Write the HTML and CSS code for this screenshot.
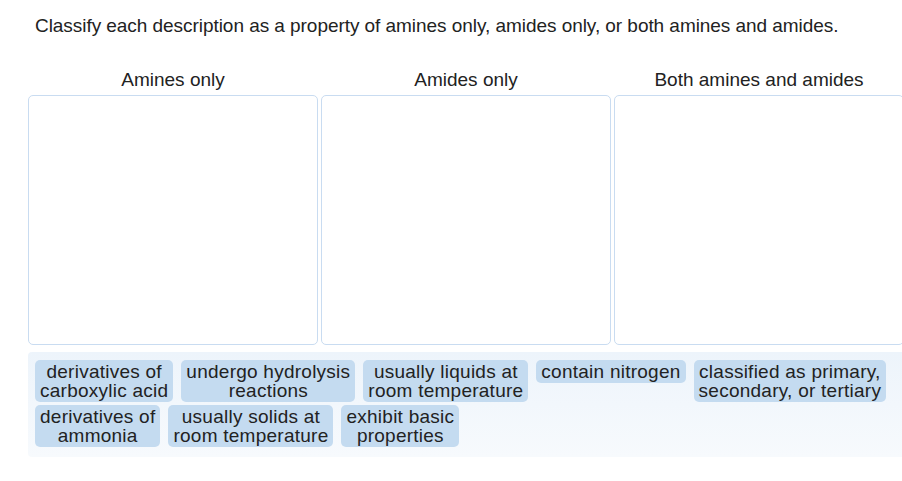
FILE: index.html
```html
<!DOCTYPE html>
<html lang="en">
<head>
    <meta charset="UTF-8">
    <title>Amines and amides</title>
    <link rel="stylesheet" href="styles.css">
</head>
<body>
    <div class="page">
        <p class="prompt">Classify each description as a property of amines only, amides only, or both amines and amides.</p>
        <div class="bins">
            <div class="bin">
                <div class="bin-title">Amines only</div>
                <div class="drop"></div>
            </div>
            <div class="bin">
                <div class="bin-title">Amides only</div>
                <div class="drop"></div>
            </div>
            <div class="bin">
                <div class="bin-title">Both amines and amides</div>
                <div class="drop"></div>
            </div>
        </div>
        <div class="tray">
            <div class="chip">derivatives of<br>carboxylic acid</div>
            <div class="chip">undergo hydrolysis<br>reactions</div>
            <div class="chip">usually liquids at<br>room temperature</div>
            <div class="chip">contain nitrogen</div>
            <div class="chip">classified as primary,<br>secondary, or tertiary</div>
            <div class="chip">derivatives of<br>ammonia</div>
            <div class="chip">usually solids at<br>room temperature</div>
            <div class="chip">exhibit basic<br>properties</div>
        </div>
    </div>
</body>
</html>
```

FILE: styles.css
```css
*{ margin: 0; padding: 0; box-sizing: border-box; }
html,body{
    height: 100%;
    overflow: hidden;
    background: #fff;
}
body{
    font-family: "Liberation Sans", Arial, sans-serif;
    color: #222;
}
.page{
    width: 904px;
    padding: 15px 0 0 28px;
}
.prompt{
    font-size: 19px;
    line-height: 22px;
    padding-left: 7px;
    letter-spacing: -0.05px;
}
.bins{
    display: flex;
    gap: 3px;
    margin-top: 32px;
}
.bin{
    width: 290px;
    flex: none;
}
.bin-title{
    font-size: 19px;
    line-height: 22px;
    text-align: center;
    margin-bottom: 4px;
}
.drop{
    height: 250px;
    border: 1px solid #c9dcf1;
    border-radius: 5px;
    background: #fff;
}
.tray{
    display: flex;
    flex-wrap: wrap;
    align-items: flex-start;
    gap: 3px 8px;
    width: 876px;
    margin-top: 7px;
    padding: 8px 7px 10px;
    background: linear-gradient(#edf4fb, #f7fafd);
    border-radius: 4px 0 0 4px;
}
.chip{
    background: #c4dbf0;
    border-radius: 5px;
    padding: 2px 5px;
    font-size: 19px;
    line-height: 19px;
    letter-spacing: 0.25px;
    text-align: center;
    white-space: nowrap;
}
```
